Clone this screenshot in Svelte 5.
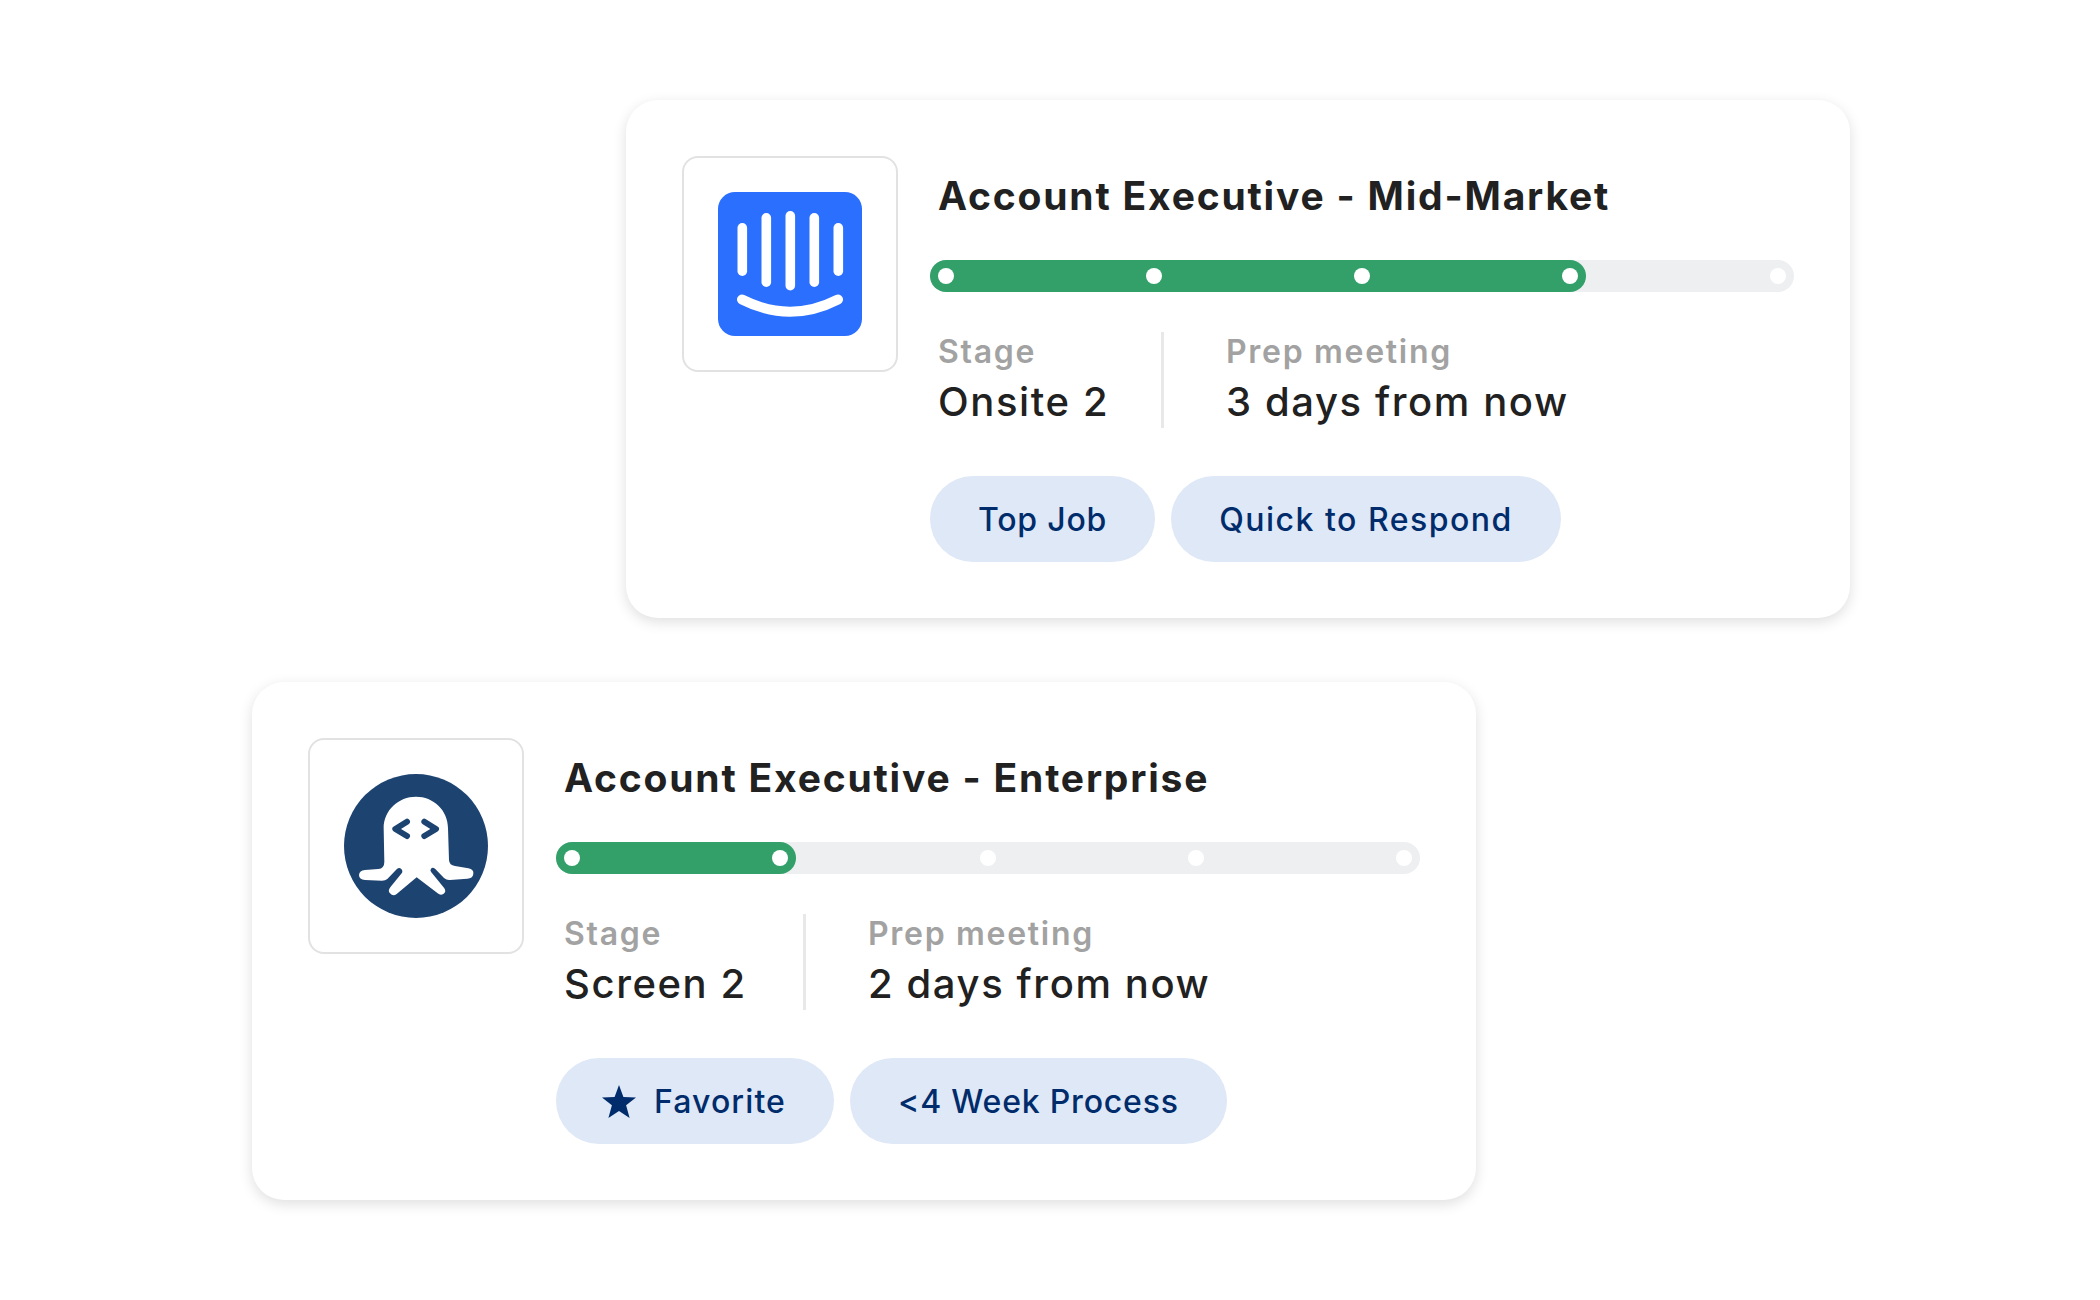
<script>
  const cards = [
    {
      title: 'Account Executive - Mid-Market',
      logo: 'intercom',
      filled: 4,
      stage: 'Onsite 2',
      statWidth: 223,
      prep: '3 days from now',
      tags: [{ text: 'Top Job', ls: 0.8 }, { text: 'Quick to Respond', ls: 1.5 }],
      cls: 'first'
    },
    {
      title: 'Account Executive - Enterprise',
      logo: 'octopus',
      filled: 2,
      stage: 'Screen 2',
      statWidth: 239,
      prep: '2 days from now',
      tags: [{ text: 'Favorite', star: true, ls: 1.1 }, { text: '<4 Week Process', ls: 0.8 }],
      cls: 'second'
    }
  ];
  const bars = [
    [19.5, 31, 53],
    [43.5, 21, 74],
    [67.5, 19, 79.5],
    [91.5, 21, 74],
    [115.5, 31, 53]
  ];
  const dots = [0, 1, 2, 3, 4];
</script>

<main class="page">
  {#each cards as card}
    <article class="card {card.cls}">
      <div class="logo">
        {#if card.logo === 'intercom'}
          <svg width="144" height="144" viewBox="0 0 144 144" aria-hidden="true">
            <rect width="144" height="144" rx="17" fill="#2b6fff" />
            {#each bars as b}
              <rect x={b[0]} y={b[1]} width="9.6" height={b[2]} rx="4.8" fill="#fff" />
            {/each}
            <path d="M24 107.5 Q72 132 120 107.5" fill="none" stroke="#fff" stroke-width="10" stroke-linecap="round" />
          </svg>
        {:else}
          <svg width="144" height="144" viewBox="162 162 432 432" aria-hidden="true">
            <circle cx="378" cy="378" r="216" fill="#1d4370" />
            <path fill="#fff" d="M378 230 C430 230 474 270 474 325 L477 420 Q478 436 495 438 L535 445 Q552 448 550 462 Q548 476 532 476 L480 480 Q470 481 462 474 L436 447 Q428 440 423 446 Q419 451 424 457 L463 505 Q470 516 460 522 Q451 527 443 520 L380 472 L320 522 Q309 530 300 520 Q292 512 302 500 L335 460 Q340 452 333 446 Q327 441 320 448 L292 477 Q286 482 276 482 L225 480 Q207 479 207 465 Q208 451 225 450 L265 447 Q283 445 283 425 L281 325 C281 270 326 230 378 230 Z" />
            <path d="M351 305 L316 327 L351 348 M403 305 L438 327 L403 348" fill="none" stroke="#1d4370" stroke-width="18" stroke-linecap="round" stroke-linejoin="round" />
          </svg>
        {/if}
      </div>
      <div class="body">
        <h2>{card.title}</h2>
        <div class="track">
          <div class="fill" style="width: {32 + (card.filled - 1) * 208}px"></div>
          <div class="dots">
            {#each dots as d}
              <span class="dot"></span>
            {/each}
          </div>
        </div>
        <div class="stats">
          <div class="stat" style="width: {card.statWidth}px">
            <div class="label">Stage</div>
            <div class="value">{card.stage}</div>
          </div>
          <div class="rule"></div>
          <div class="stat">
            <div class="label">Prep meeting</div>
            <div class="value">{card.prep}</div>
          </div>
        </div>
        <div class="tags">
          {#each card.tags as tag}
            <span class="tag" style="letter-spacing: {tag.ls}px">
              {#if tag.star}
                <svg class="star" width="34" height="33" viewBox="0 0 34 33" aria-hidden="true">
                  <path d="M17 0 L21.4 11.9 L34 12.4 L24.1 20.3 L27.6 33 L17 25.9 L6.4 33 L9.9 20.3 L0 12.4 L12.6 11.9 Z" fill="#002c6b" />
                </svg>
              {/if}
              {tag.text}
            </span>
          {/each}
        </div>
      </div>
    </article>
  {/each}
</main>

<style>
  :global(body) {
    margin: 0;
    background: #fff;
  }
  .page {
    width: 2100px;
    height: 1300px;
    padding-top: 100px;
    box-sizing: border-box;
    display: flex;
    flex-direction: column;
    gap: 64px;
    font-family: Inter, "Open Sans", sans-serif;
    overflow: hidden;
  }
  .card {
    width: 1224px;
    height: 518px;
    box-sizing: border-box;
    padding: 56px;
    display: flex;
    gap: 32px;
    background: #fff;
    border-radius: 32px;
    box-shadow: 0 4px 14px rgba(0, 0, 0, 0.13);
  }
  .first { margin-left: 626px; }
  .second { margin-left: 252px; }
  .logo {
    width: 216px;
    height: 216px;
    box-sizing: border-box;
    flex: none;
    border: 2px solid #e2e2e2;
    border-radius: 16px;
    display: flex;
    align-items: center;
    justify-content: center;
  }
  .body {
    flex: 1;
    min-width: 0;
  }
  h2 {
    margin: 0;
    padding: 18px 0 0 8px;
    font-size: 39px;
    line-height: 44px;
    font-weight: 700;
    color: #212121;
    letter-spacing: 1.8px;
  }
  .track {
    position: relative;
    margin-top: 42px;
    height: 32px;
    border-radius: 16px;
    background: #edeff1;
  }
  .fill {
    position: absolute;
    inset: 0 auto 0 0;
    border-radius: 16px;
    background: #33a069;
  }
  .dots {
    position: absolute;
    inset: 0;
    padding: 0 8px;
    display: flex;
    align-items: center;
    justify-content: space-between;
  }
  .dot {
    width: 16px;
    height: 16px;
    border-radius: 50%;
    background: #fff;
  }
  .stats {
    display: flex;
    margin-top: 40px;
    padding-left: 8px;
    height: 96px;
  }
  .stat { flex: none; }
  .label {
    padding-top: 1px;
    font-size: 32px;
    line-height: 38px;
    font-weight: 600;
    color: #a2a2a2;
    letter-spacing: 1.7px;
  }
  .value {
    margin-top: 7px;
    font-size: 40px;
    line-height: 48px;
    font-weight: 500;
    color: #212121;
    letter-spacing: 1.6px;
  }
  .rule {
    width: 3px;
    background: #e8e8e8;
    margin-right: 62px;
  }
  .tags {
    display: flex;
    gap: 16px;
    margin-top: 48px;
  }
  .tag {
    height: 86px;
    padding: 0 48px;
    display: flex;
    align-items: center;
    gap: 18px;
    border-radius: 43px;
    background: #dfe8f7;
    color: #002c6b;
    font-size: 32px;
    font-weight: 500;
    white-space: nowrap;
  }
  .star { flex: none; margin-left: -2px; }
</style>
